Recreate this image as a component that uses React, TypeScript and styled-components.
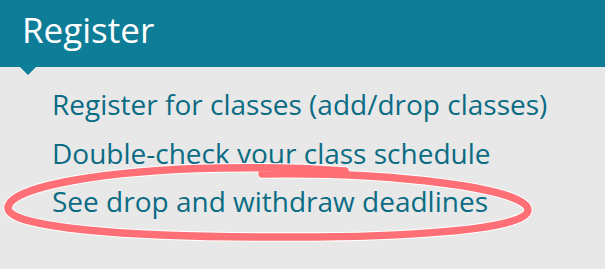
import React from "react";
import styled, { createGlobalStyle } from "styled-components";

const Global = createGlobalStyle`
  html, body { margin: 0; padding: 0; background: #e8e8e8; }
  body { font-family: "Open Sans", "Noto Sans", sans-serif; }
`;

const Page = styled.div`
  position: relative;
  width: 605px;
  height: 269px;
  background: #e8e8e8;
  overflow: hidden;
`;

const Header = styled.div`
  position: relative;
  height: 67px;
  box-sizing: border-box;
  padding: 6px 0 0 22px;
  background: #0e7d97;
  &::after {
    content: "";
    position: absolute;
    left: 20px;
    top: 67px;
    border-left: 8.5px solid transparent;
    border-right: 8.5px solid transparent;
    border-top: 8px solid #0e7d97;
  }
`;

const Title = styled.h2`
  margin: 0;
  font-size: 35px;
  font-weight: 400;
  line-height: normal;
  color: #ffffff;
`;

const List = styled.ul`
  list-style: none;
  margin: 0;
  padding: 13px 0 0 52px;
`;

const Item = styled.li`
  font-size: 28px;
  line-height: 48.5px;
`;

const Link = styled.a`
  color: #0b6c84;
  text-decoration: none;
`;

const Annotation = styled.svg`
  position: absolute;
  left: 0;
  top: 0;
  pointer-events: none;
`;

const loop =
  "M 262 174 C 390 172, 528 188, 528 210 C 528 230, 400 238, 270 237 C 130 237, 8 228, 8 208 C 8 186, 110 170, 220 168 C 270 167, 310 168, 345 171";

export default function App() {
  return (
    <Page>
      <Global />
      <Header>
        <Title>Register</Title>
      </Header>
      <List>
        <Item><Link href="#">Register for classes (add/drop classes)</Link></Item>
        <Item><Link href="#">Double-check your class schedule</Link></Item>
        <Item><Link href="#">See drop and withdraw deadlines</Link></Item>
      </List>
      <Annotation width="605" height="269" viewBox="0 0 605 269">
        <path d={loop} fill="none" stroke="#ffffff" strokeWidth="9.5" strokeLinecap="round" />
        <path d={loop} fill="none" stroke="#ff7076" strokeWidth="7.5" strokeLinecap="round" />
      </Annotation>
    </Page>
  );
}
